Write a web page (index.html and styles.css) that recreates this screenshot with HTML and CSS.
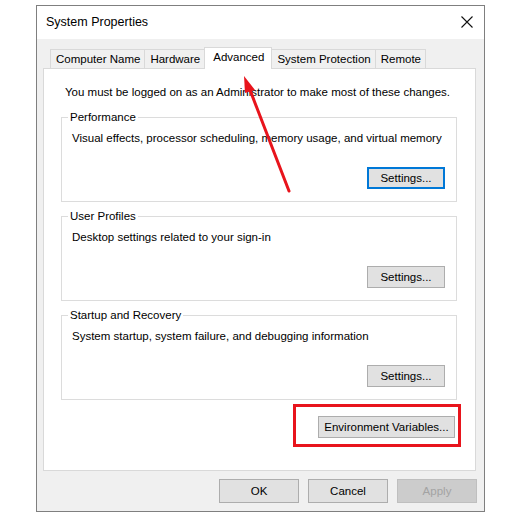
FILE: index.html
```html
<!DOCTYPE html>
<html lang="en">
<head>
    <meta charset="UTF-8">
    <meta name="viewport" content="width=device-width, initial-scale=1.0">
    <title>System Properties</title>
    <link rel="stylesheet" href="styles.css">
</head>
<body>
    <div class="window">
        <div class="titlebar">
            <span class="title">System Properties</span>
            <svg class="close" width="12" height="12" viewBox="0 0 12 12">
                <path d="M0.5 0.5 L11.5 11.5 M11.5 0.5 L0.5 11.5" stroke="#111" stroke-width="1.1" fill="none"/>
            </svg>
        </div>

        <div class="dialog-body">
            <div class="tabs">
                <div class="tab">Computer Name</div>
                <div class="tab">Hardware</div>
                <div class="tab active">Advanced</div>
                <div class="tab">System Protection</div>
                <div class="tab">Remote</div>
            </div>

            <div class="panel">
                <p class="note">You must be logged on as an Administrator to make most of these changes.</p>

                <fieldset class="group">
                    <legend>Performance</legend>
                    <p class="desc">Visual effects, processor scheduling, memory usage, and virtual memory</p>
                    <div class="group-actions">
                        <button class="btn focused">Settings...</button>
                    </div>
                </fieldset>

                <fieldset class="group">
                    <legend>User Profiles</legend>
                    <p class="desc">Desktop settings related to your sign-in</p>
                    <div class="group-actions">
                        <button class="btn">Settings...</button>
                    </div>
                </fieldset>

                <fieldset class="group">
                    <legend>Startup and Recovery</legend>
                    <p class="desc">System startup, system failure, and debugging information</p>
                    <div class="group-actions">
                        <button class="btn">Settings...</button>
                    </div>
                </fieldset>

                <div class="env-row">
                    <div class="highlight">
                        <button class="btn env">Environment Variables...</button>
                    </div>
                </div>
            </div>

            <div class="dialog-buttons">
                <button class="btn wide">OK</button>
                <button class="btn wide">Cancel</button>
                <button class="btn wide" disabled>Apply</button>
            </div>
        </div>
    </div>

    <!-- annotation arrow drawn over the dialog -->
    <svg class="arrow" width="522" height="526" viewBox="0 0 522 526">
        <line x1="289" y1="191" x2="250" y2="90" stroke="#e8141c" stroke-width="3" stroke-linecap="round"/>
        <polygon points="244,76 255,90 245,93" fill="#e8141c"/>
    </svg>
</body>
</html>
```

FILE: styles.css
```css
* {
    box-sizing: border-box;
}

body {
    margin: 0;
    padding: 5px 0 0 36px;
    background: #fff;
    font-family: "Liberation Sans", Arial, sans-serif;
    font-size: 11.5px;
    color: #000;
    position: relative;
    width: 522px;
    height: 526px;
    overflow: hidden;
}

.window {
    width: 449px;
    height: 507px;
    border: 1px solid #7f7f7f;
    display: flex;
    flex-direction: column;
}

.titlebar {
    height: 33px;
    background: #fff;
    display: flex;
    align-items: center;
    justify-content: space-between;
    padding: 0 11px 0 9px;
}

.title {
    font-size: 12.5px;
    margin-top: -1px;
}

.close {
    margin-top: -1px;
}

.dialog-body {
    flex: 1;
    background: #f0f0f0;
    padding: 8px 7px 0 6px;
}

.tabs {
    display: flex;
    align-items: flex-end;
    padding-left: 7px;
    height: 21px;
    position: relative;
    z-index: 1;
}

.tab {
    height: 19px;
    line-height: 18px;
    padding: 0 4px 0 5px;
    border: 1px solid #d9d9d9;
    border-bottom: none;
    margin-right: -1px;
    background: #f0f0f0;
    white-space: nowrap;
}

.tab.active {
    height: 22px;
    line-height: 19px;
    padding: 0 7px 0 8px;
    margin-bottom: -1px;
    background: #fff;
    position: relative;
    z-index: 2;
}

.panel {
    height: 403px;
    margin-right: 1px;
    background: #fff;
    border: 1px solid #d9d9d9;
    padding-top: 16px;
}

.note {
    margin: 0 0 10px 21px;
    line-height: 15px;
    white-space: nowrap;
}

.group {
    margin: 0 18px 7px 17px;
    padding: 0 11px 12px 9px;
    border: 1px solid #dcdcdc;
}

.group legend {
    padding: 0 2px;
    margin-left: -3px;
    line-height: 15px;
}

.desc {
    margin: 6px 0 0 1px;
    line-height: 15px;
    white-space: nowrap;
}

.group-actions {
    display: flex;
    justify-content: flex-end;
    margin-top: 21px;
}

.btn {
    font-family: "Liberation Sans", Arial, sans-serif;
    font-size: 11.5px;
    color: #000;
    background: #e1e1e1;
    border: 1px solid #adadad;
    height: 22px;
    width: 78px;
    padding: 0;
}

.btn.focused {
    border-color: #0078d7;
    box-shadow: inset 0 0 0 1px #0078d7;
}

.btn:disabled {
    background: #cccccc;
    border-color: #bfbfbf;
    color: #a3a3a3;
}

.env-row {
    display: flex;
    justify-content: flex-end;
    margin: -3px 14px 0 0;
}

.highlight {
    border: 3px solid #e8141c;
    padding: 9px 3px 6px 22px;
}

.btn.env {
    width: 137px;
}

.dialog-buttons {
    display: flex;
    justify-content: flex-end;
    gap: 9px;
    margin-top: 8px;
}

.btn.wide {
    width: 80px;
    height: 24px;
}

.arrow {
    position: absolute;
    left: 0;
    top: 0;
    pointer-events: none;
}
```
